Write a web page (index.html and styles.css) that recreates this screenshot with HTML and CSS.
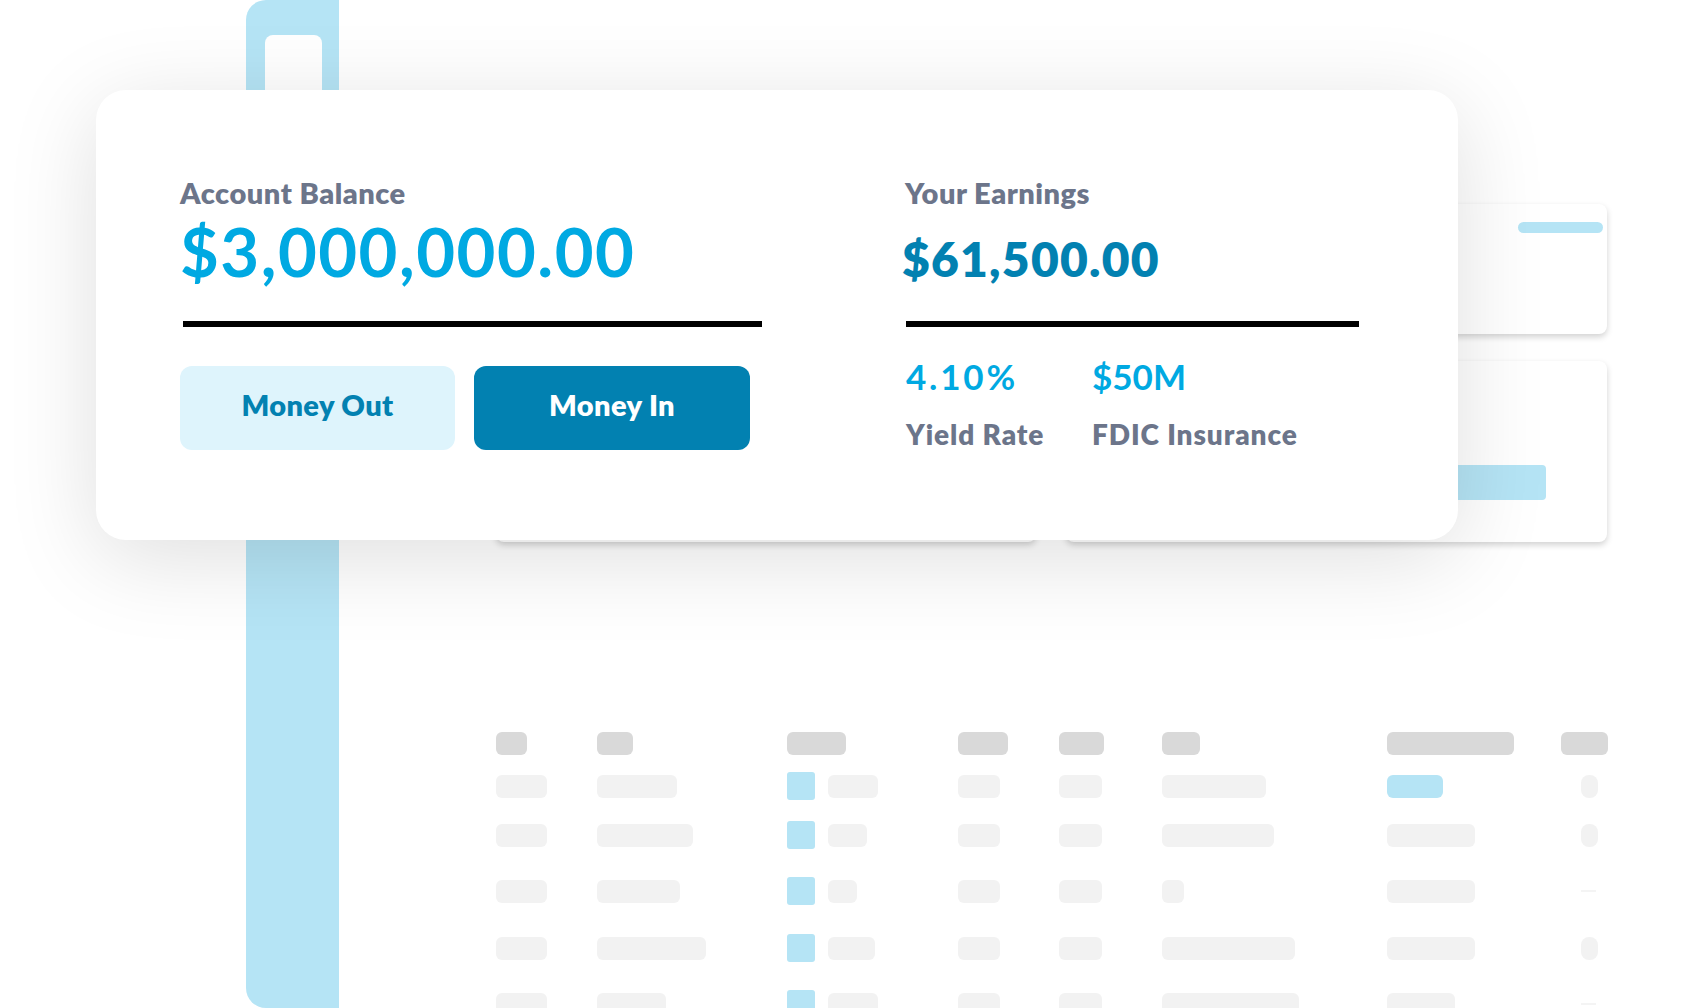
FILE: index.html
```html
<!DOCTYPE html>
<html lang="en">
<head>
<meta charset="utf-8">
<title>Account Overview</title>
<link rel="stylesheet" href="styles.css">
</head>
<body>
<div class="dashboard">
  <aside class="sidebar"><div class="sidebar-tab"></div></aside>
  <main class="content">
    <div class="cards">
      <div class="card card-wide"></div>
      <div class="card card-top"><span class="card-bar"></span></div>
      <div class="card card-bottom"><span class="card-block"></span></div>
    </div>
    <div class="table">
      <div class="trow thead">
        <span class="pill dark" style="width:31px"></span>
        <span class="pill dark" style="width:36px"></span>
        <span class="pill dark" style="width:59px"></span>
        <span class="pill dark" style="width:50px"></span>
        <span class="pill dark" style="width:45px"></span>
        <span class="pill dark" style="width:38px"></span>
        <span class="pill dark" style="width:127px"></span>
        <span class="pill dark" style="width:47px"></span>
      </div>
      <div class="trow r1">
        <span class="pill" style="width:51px"></span>
        <span class="pill" style="width:80px"></span>
        <span class="cell-pair"><span class="sq"></span><span class="pill" style="width:50px"></span></span>
        <span class="pill" style="width:42px"></span>
        <span class="pill" style="width:43px"></span>
        <span class="pill" style="width:104px"></span>
        <span class="pill blue" style="width:56px"></span>
        <span class="pill tiny"></span>
      </div>
      <div class="trow r2">
        <span class="pill" style="width:51px"></span>
        <span class="pill" style="width:96px"></span>
        <span class="cell-pair"><span class="sq"></span><span class="pill" style="width:39px"></span></span>
        <span class="pill" style="width:42px"></span>
        <span class="pill" style="width:43px"></span>
        <span class="pill" style="width:112px"></span>
        <span class="pill" style="width:88px"></span>
        <span class="pill tiny"></span>
      </div>
      <div class="trow r3">
        <span class="pill" style="width:51px"></span>
        <span class="pill" style="width:83px"></span>
        <span class="cell-pair"><span class="sq"></span><span class="pill" style="width:29px"></span></span>
        <span class="pill" style="width:42px"></span>
        <span class="pill" style="width:43px"></span>
        <span class="pill" style="width:22px"></span>
        <span class="pill" style="width:88px"></span>
        <span class="dash"></span>
      </div>
      <div class="trow r4">
        <span class="pill" style="width:51px"></span>
        <span class="pill" style="width:109px"></span>
        <span class="cell-pair"><span class="sq"></span><span class="pill" style="width:47px"></span></span>
        <span class="pill" style="width:42px"></span>
        <span class="pill" style="width:43px"></span>
        <span class="pill" style="width:133px"></span>
        <span class="pill" style="width:88px"></span>
        <span class="pill tiny"></span>
      </div>
      <div class="trow r5">
        <span class="pill" style="width:51px"></span>
        <span class="pill" style="width:69px"></span>
        <span class="cell-pair"><span class="sq"></span><span class="pill" style="width:50px"></span></span>
        <span class="pill" style="width:42px"></span>
        <span class="pill" style="width:43px"></span>
        <span class="pill" style="width:137px"></span>
        <span class="pill" style="width:68px"></span>
        <span class="dash"></span>
      </div>
    </div>
  </main>

  <section class="summary">
    <div class="col">
      <div class="label">Account Balance</div>
      <div class="balance">$3,000,000.00</div>
      <div class="rule rule-left"></div>
      <div class="actions">
        <button class="btn btn-out">Money Out</button>
        <button class="btn btn-in">Money In</button>
      </div>
    </div>
    <div class="col">
      <div class="label">Your Earnings</div>
      <div class="earnings">$61,500.00</div>
      <div class="rule rule-right"></div>
      <div class="stats">
        <div class="stat stat-first">
          <div class="stat-value stat-rate">4.10%</div>
          <div class="stat-label">Yield Rate</div>
        </div>
        <div class="stat">
          <div class="stat-value">$50M</div>
          <div class="stat-label">FDIC Insurance</div>
        </div>
      </div>
    </div>
  </section>
</div>
</body>
</html>
```

FILE: styles.css
```css
* { box-sizing: border-box; }

html, body {
  margin: 0;
  padding: 0;
  background: #ffffff;
}

body {
  width: 1704px;
  height: 1008px;
  overflow: hidden;
  font-family: "Lato", "Liberation Sans", sans-serif;
}

.dashboard {
  position: relative;
  display: flex;
  align-items: flex-start;
  height: 1008px;
  padding-left: 246px;
}

/* sidebar */
.sidebar {
  flex: 0 0 93px;
  height: 1008px;
  background: #b5e4f5;
  border-radius: 20px 0 0 20px;
  padding: 35px 0 0 19px;
}

.sidebar-tab {
  width: 57px;
  height: 90px;
  background: #ffffff;
  border-radius: 8px;
}

/* background content */
.content {
  flex: 0 0 1111px;
  margin-left: 157px;
}

.cards {
  display: grid;
  grid-template-columns: 540px 541px;
  grid-template-rows: 130px 181px;
  column-gap: 30px;
  row-gap: 27px;
  padding-top: 204px;
}

.card {
  background: #ffffff;
  border-radius: 8px;
  box-shadow: 0 3px 6px rgba(0, 0, 0, 0.18);
}

.card-wide {
  grid-column: 1;
  grid-row: 1 / 3;
}

.card-top {
  grid-column: 2;
  grid-row: 1;
  display: flex;
  justify-content: flex-end;
  align-items: flex-start;
  padding: 18px 4px 0 0;
}

.card-bar {
  width: 85px;
  height: 11px;
  border-radius: 6px;
  background: #b5e4f5;
}

.card-bottom {
  grid-column: 2;
  grid-row: 2;
  display: flex;
  justify-content: flex-end;
  align-items: flex-end;
  padding: 0 61px 42px 0;
}

.card-block {
  width: 260px;
  height: 35px;
  border-radius: 4px;
  background: #b5e4f5;
}

/* table skeleton */
.table {
  margin-top: 190px;
}

.trow {
  display: grid;
  grid-template-columns: 101px 190px 171px 101px 103px 225px 174px 46px;
  align-items: center;
  height: 23px;
}

.thead { margin-bottom: 17px; }
.r1 { margin-bottom: 26px; }
.r2 { margin-bottom: 33px; }
.r3 { margin-bottom: 34px; }
.r4 { margin-bottom: 33px; }

.pill {
  display: block;
  height: 23px;
  border-radius: 6px;
  background: #f2f2f2;
}

.pill.dark { background: #d9d9d9; }
.pill.blue { background: #b5e4f5; }

.pill.tiny {
  width: 17px;
  margin-left: 20px;
  border-radius: 8px;
}

.dash {
  display: block;
  width: 15px;
  height: 2px;
  margin-left: 20px;
  background: #f4f4f4;
}

.cell-pair {
  display: flex;
  align-items: center;
  gap: 13px;
}

.sq {
  display: block;
  width: 28px;
  height: 28px;
  border-radius: 3px;
  background: #b5e4f5;
}

/* summary card overlay */
.summary {
  position: absolute;
  left: 96px;
  top: 90px;
  width: 1362px;
  height: 450px;
  background: #ffffff;
  border-radius: 30px;
  box-shadow: 0 18px 90px rgba(0, 0, 0, 0.13);
  display: grid;
  grid-template-columns: 725px 1fr;
  padding: 88px 0 0 84px;
}

.label {
  font-size: 29px;
  line-height: 29px;
  font-weight: 800;
  color: #6c758a;
  letter-spacing: 0.5px;
}

.balance {
  margin-top: 11px;
  font-size: 67px;
  line-height: 67px;
  font-weight: 700;
  color: #00a9e2;
  letter-spacing: 1.5px;
}

.earnings {
  margin-top: 28px;
  margin-left: -3px;
  font-size: 48px;
  line-height: 48px;
  font-weight: 800;
  color: #0281b1;
  letter-spacing: 1.2px;
}

.rule {
  height: 6px;
  background: #000000;
}

.rule-left {
  margin-top: 36px;
  margin-left: 3px;
  width: 579px;
}

.rule-right {
  margin-top: 38px;
  margin-left: 1px;
  width: 453px;
}

.actions {
  display: flex;
  gap: 19px;
  margin-top: 39px;
}

.btn {
  width: 275px;
  height: 84px;
  border: none;
  border-radius: 12px;
  font-family: "Lato", "Liberation Sans", sans-serif;
  font-size: 29px;
  font-weight: 800;
  letter-spacing: 0.4px;
  padding: 0 0 8px 0;
  cursor: pointer;
}

.btn-out {
  background: #def4fc;
  color: #0281b1;
}

.btn-in {
  width: 276px;
  background: #0281b1;
  color: #ffffff;
}

.stats {
  display: flex;
  margin-left: 1px;
}

.stat-first {
  width: 186px;
}

.stat-value {
  margin-top: 32px;
  font-size: 35px;
  line-height: 35px;
  font-weight: 700;
  color: #00a9e2;
}

.stat-rate {
  letter-spacing: 2.8px;
}

.stat-label {
  margin-top: 26px;
  font-size: 28px;
  line-height: 28px;
  font-weight: 800;
  color: #6c758a;
  letter-spacing: 0.9px;
}
```
